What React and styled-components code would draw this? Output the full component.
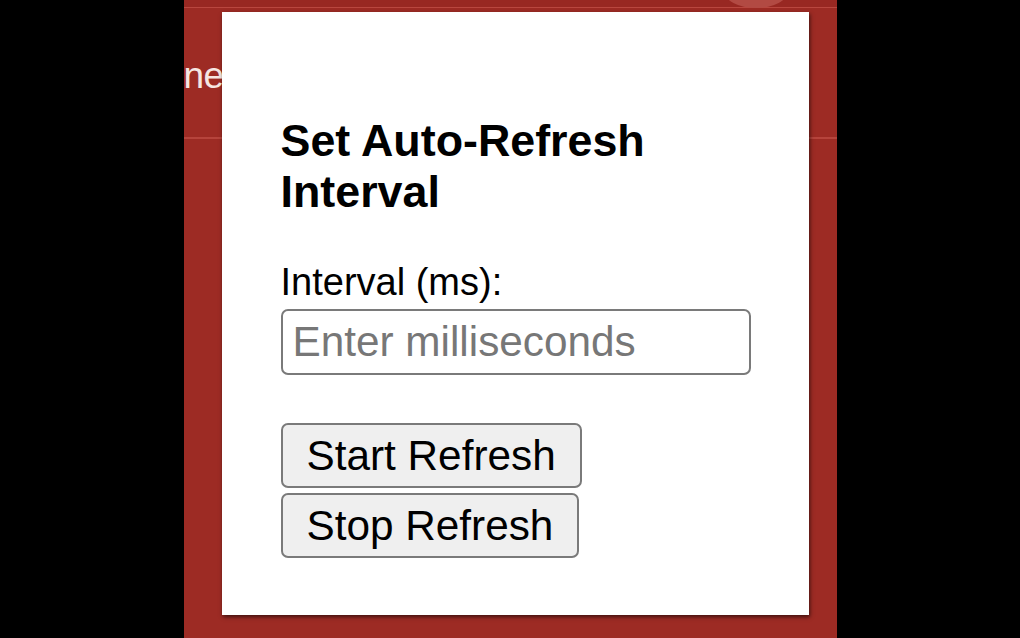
import React from "react";
import styled, { createGlobalStyle } from "styled-components";

const Global = createGlobalStyle`
  html, body { margin: 0; padding: 0; background: #000; }
  body { font-family: "Liberation Sans", Arial, sans-serif; }
  #root { width: 1020px; height: 638px; overflow: hidden; }
`;

const Screen = styled.div`
  width: 1020px;
  height: 638px;
  background: #000;
  display: flex;
  justify-content: center;
`;

const Page = styled.div`
  position: relative;
  width: 653px;
  height: 638px;
  background: #9d2b24;
  overflow: hidden;
  display: flex;
  flex-direction: column;
`;

const TopStrip = styled.div`
  position: relative;
  height: 7px;
  background: #982822;
  border-bottom: 1.5px solid #b9473f;
  flex-shrink: 0;
`;

const Knob = styled.div`
  position: absolute;
  left: 540px;
  top: -26px;
  width: 64px;
  height: 34px;
  border-radius: 50%;
  background: #b24a43;
`;

const NavRow = styled.div`
  height: 129px;
  display: flex;
  align-items: center;
  border-bottom: 2px solid #b6443c;
  flex-shrink: 0;
`;

const NavText = styled.span`
  margin-left: 0;
  margin-top: 6px;
  font-size: 37px;
  color: #f6e6e2;
  letter-spacing: -0.5px;
`;

const Popup = styled.div`
  position: absolute;
  left: 38px;
  top: 12px;
  width: 587px;
  height: 603px;
  box-sizing: border-box;
  background: #fff;
  box-shadow: 1px 2px 4px rgba(0, 0, 0, 0.6);
  padding: 103px 58px 0 59px;
  display: flex;
  flex-direction: column;
  align-items: flex-start;
`;

const Title = styled.h3`
  margin: 0;
  width: 470px;
  font-size: 44.8px;
  line-height: 51.3px;
  font-weight: bold;
  color: #000;
`;

const Label = styled.label`
  margin-top: 43px;
  font-size: 38px;
  line-height: 43.7px;
  color: #000;
`;

const Input = styled.input`
  margin-top: 5px;
  width: 470px;
  height: 66px;
  box-sizing: border-box;
  border: 2.4px solid #7a7a7a;
  border-radius: 7px;
  padding: 0 10px;
  font-family: "Liberation Sans", Arial, sans-serif;
  font-size: 42.3px;
  color: #000;
  background: #fff;
  outline: none;
  &::placeholder { color: #777; }
`;

const Buttons = styled.div`
  margin-top: 48px;
  display: flex;
  flex-direction: column;
  align-items: flex-start;
  gap: 5px;
`;

const Button = styled.button`
  height: 65px;
  box-sizing: border-box;
  padding: 0 24px;
  border: 2.4px solid #7a7a7a;
  border-radius: 7px;
  background: #efefef;
  font-family: "Liberation Sans", Arial, sans-serif;
  font-size: 42.3px;
  color: #000;
  line-height: 1;
`;

export default function App() {
  return (
    <>
      <Global />
      <Screen>
        <Page>
          <TopStrip>
            <Knob />
          </TopStrip>
          <NavRow>
            <NavText>ne</NavText>
          </NavRow>
          <Popup>
            <Title>Set Auto-Refresh Interval</Title>
            <Label htmlFor="interval">Interval (ms):</Label>
            <Input id="interval" type="number" placeholder="Enter milliseconds" />
            <Buttons>
              <Button>Start Refresh</Button>
              <Button>Stop Refresh</Button>
            </Buttons>
          </Popup>
        </Page>
      </Screen>
    </>
  );
}
